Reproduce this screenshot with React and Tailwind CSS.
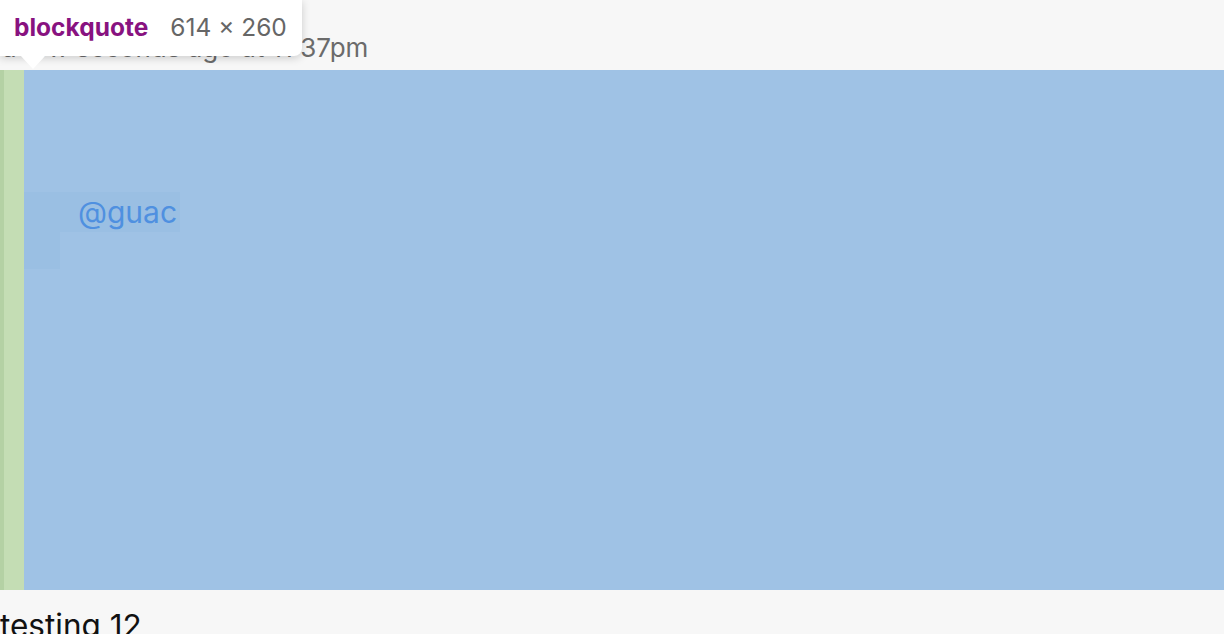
import React from "react";

export default function App() {
  return (
    <div
      className="relative w-[1224px] h-[634px] overflow-hidden bg-[#f7f7f7]"
      style={{ fontFamily: "Inter, 'Liberation Sans', sans-serif" }}
    >
      {/* timestamp */}
      <div className="h-[70px] flex items-end pb-[9px]">
        <span className="ml-[2px] text-[26px] leading-none text-[#6b6b6b] whitespace-nowrap">
          a few seconds ago at 11:37pm
        </span>
      </div>

      {/* blockquote highlighted */}
      <div className="h-[520px] flex">
        <div className="w-[4px] bg-[#b4d1a4]" />
        <div className="w-[20px] bg-[#c4ddb4]" />
        <div className="flex-1 bg-[#9fc2e5] pt-[122px]">
          <div className="w-[156px] h-[40px] bg-[#9abfe3] flex items-center pl-[54px]">
            <span className="text-[30px] leading-none text-[#4f90e0] whitespace-nowrap">
              @guac
            </span>
          </div>
          <div className="w-[36px] h-[37px] bg-[#9abfe3]" />
        </div>
      </div>

      {/* next message */}
      <div className="pt-[20px] text-[31.5px] leading-none text-[#111] whitespace-nowrap">
        testing 12
      </div>

      {/* devtools tooltip */}
      <div className="absolute left-0 top-0 w-[302px] h-[56px] bg-white rounded-br-[8px] shadow-[0_2px_8px_rgba(0,0,0,0.18)] flex items-center pl-[14px] pb-[2px] gap-[22px]">
        <span className="text-[24.5px] font-bold text-[#881280]">blockquote</span>
        <span className="text-[24.5px] text-[#666]">614 × 260</span>
      </div>
      <div className="absolute left-[20px] top-[55px] w-0 h-0 border-l-[13px] border-r-[13px] border-t-[14px] border-l-transparent border-r-transparent border-t-white" />
    </div>
  );
}
